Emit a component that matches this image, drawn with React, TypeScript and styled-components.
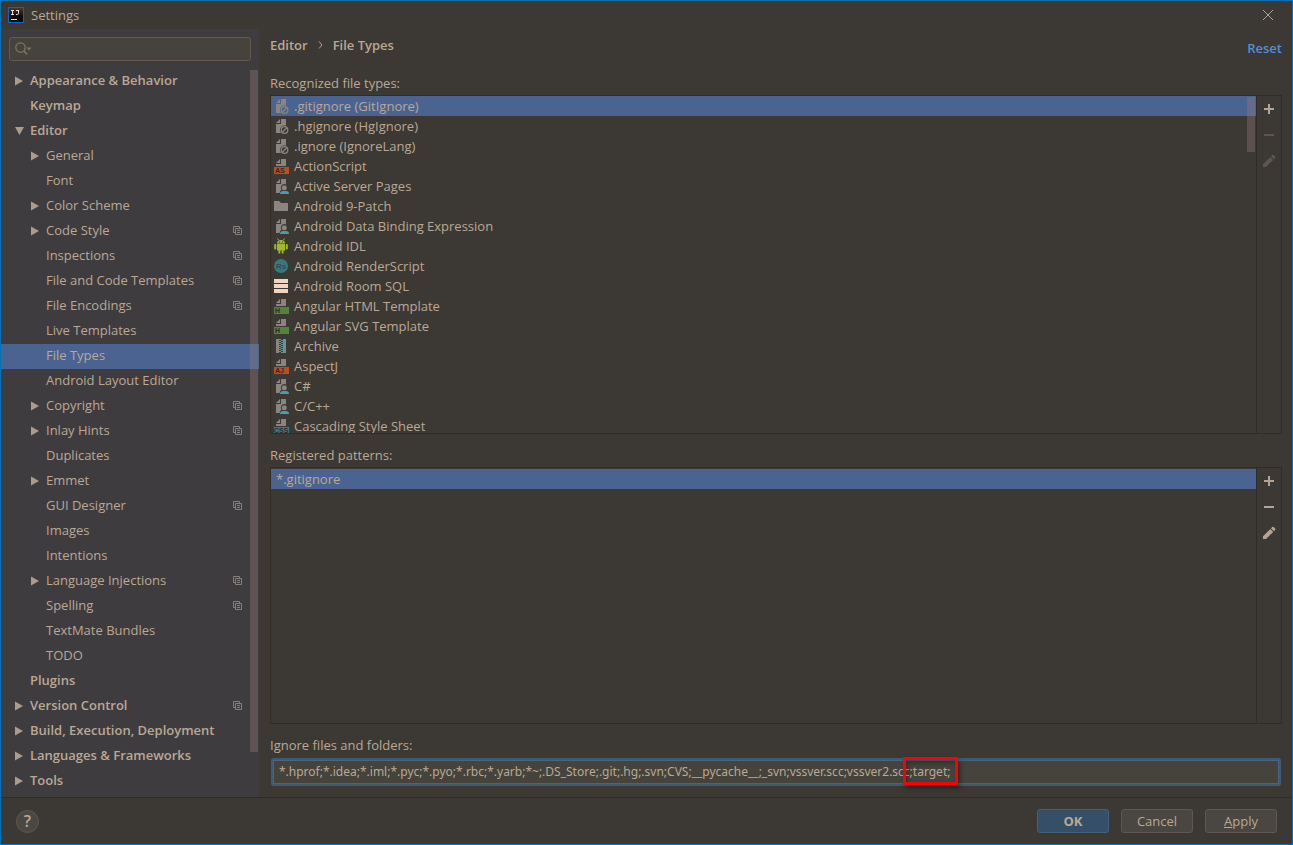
import React from "react";
import styled, { createGlobalStyle, css } from "styled-components";

const c = {
  bg: "#3c3833",
  side: "#3f3c3f",
  field: "#45433b",
  line: "#302d29",
  text: "#bba895",
  select: "#4b6390",
  icon: "#8a857e",
  frame: "#0b6fb3",
  blue: "#5390d6",
};

const Global = createGlobalStyle`
  * { box-sizing: border-box; }
  body {
    margin: 0;
    background: ${c.bg};
    color: ${c.text};
    font: 13px/20px "Open Sans", "Noto Sans", sans-serif;
  }
  button, input { font: inherit; color: inherit; }
`;

const Window = styled.div`
  display: flex;
  flex-direction: column;
  height: 100vh;
  min-height: 600px;
  border: 1px solid ${c.frame};
`;

const TitleBar = styled.header`
  display: flex;
  align-items: center;
  flex: none;
  height: 28px;
  padding: 0 18px 0 7px;
`;

const Title = styled.span`
  flex: 1;
  margin-left: 7px;
`;

const IconButton = styled.button`
  display: flex;
  align-items: center;
  justify-content: center;
  padding: 0;
  border: 0;
  background: none;
  color: #b5a496;
  &:disabled { color: #5d554e; }
`;

const Body = styled.div`
  display: flex;
  flex: 1;
  min-height: 0;
`;

const Sidebar = styled.aside`
  position: relative;
  display: flex;
  flex-direction: column;
  flex: none;
  width: 258px;
  padding-top: 8px;
  background: ${c.side};
`;

const SearchBox = styled.label`
  display: flex;
  align-items: center;
  flex: none;
  height: 24px;
  margin: 0 8px 8px;
  padding-left: 5px;
  border: 1px solid #64584f;
  border-radius: 3px;
  background: ${c.field};
`;

const SearchInput = styled.input`
  flex: 1;
  min-width: 0;
  border: 0;
  outline: 0;
  background: none;
`;

const Tree = styled.ul`
  flex: 1;
  min-height: 0;
  margin: 0;
  padding: 0;
  overflow: hidden;
  list-style: none;
`;

const TreeRow = styled.li<{ $level: number; $selected?: boolean }>`
  display: flex;
  align-items: center;
  height: 25px;
  padding: 0 17px 2px ${(p) => (p.$level ? 29 : 13)}px;
  font-weight: ${(p) => (p.$level ? 400 : 600)};
  background: ${(p) => (p.$selected ? c.select : "transparent")};
`;

const ArrowSlot = styled.span`
  display: flex;
  align-items: center;
  width: 16px;
`;

const TreeLabel = styled.span`
  flex: 1;
  padding-bottom: 1px;
  white-space: nowrap;
`;

const Thumb = styled.div<{ $top: number; $right: number; $length: string }>`
  position: absolute;
  top: ${(p) => p.$top}px;
  right: ${(p) => p.$right}px;
  width: 8px;
  height: ${(p) => p.$length};
  background: rgba(148, 127, 120, 0.35);
`;

const Main = styled.main`
  display: flex;
  flex-direction: column;
  flex: 1;
  min-width: 0;
  padding: 6px 10px 11px 11px;
`;

const Heading = styled.div`
  display: flex;
  align-items: flex-start;
  justify-content: space-between;
  flex: none;
  height: 38px;
  font-weight: 600;
`;

const Crumbs = styled.nav`
  display: flex;
  align-items: center;
  gap: 10px;
`;

const Reset = styled.a`
  padding-top: 3px;
  color: ${c.blue};
  text-decoration: none;
`;

const SectionLabel = styled.label<{ $gap?: boolean }>`
  flex: none;
  height: 22px;
  margin-top: ${(p) => (p.$gap ? 11 : 0)}px;
`;

const Panel = styled.div<{ $fixed?: boolean }>`
  display: flex;
  min-height: 0;
  border: 1px solid ${c.line};
  ${(p) =>
    p.$fixed
      ? css`
          flex: none;
          height: 257px;
        `
      : css`
          flex: 1;
        `}
`;

const List = styled.ul<{ $inset?: boolean }>`
  position: relative;
  flex: 1;
  margin: 0;
  padding: ${(p) => (p.$inset ? 1 : 0)}px 0 0;
  overflow: hidden;
  list-style: none;
`;

const ListRow = styled.li<{ $selected?: boolean }>`
  display: flex;
  align-items: center;
  gap: 5px;
  height: 20px;
  padding-left: 2px;
  white-space: nowrap;
  background: ${(p) => (p.$selected ? c.select : "transparent")};
`;

const PatternText = styled.span`
  padding-left: 3px;
`;

const Tools = styled.div`
  display: flex;
  flex-direction: column;
  align-items: center;
  gap: 10px;
  width: 25px;
  padding-top: 5px;
  border-left: 1px solid ${c.line};
`;

const FieldWrap = styled.div`
  position: relative;
  flex: none;
  padding: 1px 1px 0;
`;

const Field = styled.input`
  display: block;
  width: 100%;
  height: 28px;
  padding: 0 6px 2px;
  border: 2px solid #3d5a73;
  border-radius: 2px;
  outline: 0;
  background: ${c.field};
  box-shadow: inset 0 0 0 1px #466582;
  font: 12px "Noto Sans", sans-serif;
`;

const Highlight = styled.div`
  position: absolute;
  top: 0;
  left: 633px;
  width: 55px;
  height: 28px;
  border: 3px solid #fb0007;
  box-shadow: 2px 3px 5px rgba(0, 0, 0, 0.4), inset 2px 3px 5px rgba(0, 0, 0, 0.3);
  pointer-events: none;
`;

const Footer = styled.footer`
  display: flex;
  align-items: center;
  gap: 12px;
  flex: none;
  height: 47px;
  padding: 0 15px;
  border-top: 1px solid ${c.line};
`;

const Help = styled.button`
  width: 23px;
  height: 23px;
  margin-right: auto;
  padding: 0;
  border: 1px solid #5e5850;
  border-radius: 50%;
  background: #4b4741;
  font-size: 16px;
  font-weight: 600;
  line-height: 20px;
`;

const Button = styled.button<{ $primary?: boolean }>`
  width: 72px;
  height: 24px;
  padding: 0;
  border: 1px solid ${(p) => (p.$primary ? "#44617b" : "#5e5850")};
  border-radius: 3px;
  background: ${(p) => (p.$primary ? "#364f69" : "#4a4641")};
  font-weight: ${(p) => (p.$primary ? 700 : 400)};
  line-height: 20px;
`;

const Arrow = ({ open }: { open?: boolean }) => (
  <svg width="10" height="10" viewBox="0 0 10 10" fill="#ad9c8d" aria-hidden>
    {open ? <path d="M1 1h9L5.500 9z" /> : <path d="M1 .5v9L9 5z" />}
  </svg>
);

const CopyIcon = () => (
  <svg width="9" height="9" viewBox="0 0 9 9" fill="none" stroke="#85807c" aria-hidden>
    <path d="M2 6.500H.5v-6h6V2M2.500 2.500h6v6h-6zM4 4.500h3M4 6.500h3" />
  </svg>
);

const Logo = () => (
  <svg width="16" height="16" viewBox="0 0 16 16" aria-hidden>
    <defs>
      <linearGradient id="logo" x1="0" y1="0" x2="0" y2="1">
        <stop offset="0" stopColor="#4a3c38" />
        <stop offset="0.6" stopColor="#0c0a0a" />
      </linearGradient>
    </defs>
    <rect x="0.5" y="0.5" width="15" height="15" fill="url(#logo)" stroke="#0f62c4" />
    <path
      d="M3 3.500h3M4.500 3.500v4M3 7.500h3M8 3.500h3M10.500 3.500v3q0 1-1 1H8M3 12.500h6"
      fill="none"
      stroke="#f3e2d4"
    />
  </svg>
);

const SearchIcon = () => (
  <svg width="17" height="14" viewBox="0 0 17 14" fill="none" stroke="#7c756c" aria-hidden>
    <circle cx="5.500" cy="5.500" r="4.700" strokeWidth="1.200" />
    <path d="M9 9l3 3.200" strokeWidth="1.600" />
    <path d="M11.500 5.500h5L14 8.500z" fill="#7c756c" stroke="none" />
  </svg>
);

const CloseIcon = () => (
  <svg width="12" height="12" viewBox="0 0 12 12" stroke="currentColor" aria-hidden>
    <path d="M1 1l10 10M11 1L1 11" />
  </svg>
);

const Plus = () => (
  <svg width="16" height="16" viewBox="0 0 16 16" fill="currentColor" aria-hidden>
    <path d="M7 3h2v4h4v2H9v4H7V9H3V7h4z" />
  </svg>
);

const Minus = () => (
  <svg width="16" height="16" viewBox="0 0 16 16" fill="currentColor" aria-hidden>
    <path d="M3 7h10v2H3z" />
  </svg>
);

const Pencil = () => (
  <svg width="16" height="16" viewBox="0 0 16 16" fill="currentColor" aria-hidden>
    <path d="M2 11.200L9.300 4l2.900 2.900L5 14H2zM10 3.300l1.300-1.200q.7-.6 1.400 0l1.400 1.400q.7.700 0 1.400L12.900 6.200z" />
  </svg>
);

type Kind =
  | "ignore"
  | "user"
  | "folder"
  | "android"
  | "rs"
  | "sql"
  | "archive"
  | { tag: string; color: string };

const Page = ({ short }: { short?: boolean }) => (
  <path
    fill={c.icon}
    d={short ? "M7 1v4H3zM8 1h5v7H3V6h5z" : "M7 1v4H3zM8 1h5v14H3V6h5z"}
  />
);

const FileIcon = ({ kind, selected }: { kind: Kind; selected?: boolean }) => {
  const back = selected ? c.select : c.bg;
  return (
    <svg width="16" height="16" viewBox="0 0 16 16" aria-hidden>
      {typeof kind === "object" && (
        <>
          <Page short />
          <rect x="1" y="9" width="15" height="7" fill={kind.color} />
          <text
            x={kind.tag.length > 2 ? 1 : 2}
            y="15"
            fontSize="7"
            fontWeight="700"
            fontFamily="Liberation Sans, sans-serif"
            fill="#35291f"
          >
            {kind.tag}
          </text>
        </>
      )}
      {kind === "ignore" && (
        <>
          <Page />
          <circle cx="11.500" cy="12" r="4.600" fill={back} />
          <circle cx="11.500" cy="12" r="3.300" fill="none" stroke={c.icon} strokeWidth="1.300" />
          <path d="M9.300 14.200l4.400-4.400" stroke={c.icon} strokeWidth="1.300" />
        </>
      )}
      {kind === "user" && (
        <>
          <Page />
          <path d="M11.500 6a3.700 3.700 0 0 1 3 6v1H16v3H6.500l.5-3 1.600-1a3.700 3.700 0 0 1 2.900-6z" fill={back} />
          <circle cx="11.300" cy="9.700" r="2.500" fill={c.icon} />
          <path d="M7 16q0-3 3-3h3q3 0 3 3z" fill="#41a0b5" />
        </>
      )}
      {kind === "folder" && <path d="M1 3h5l2 2h7v8H1z" fill={c.icon} />}
      {kind === "android" && (
        <g fill="#a3b92c">
          <path d="M4 5.500a4 3.500 0 0 1 8 0zM4 6h8v6.500H4zM5.500 12h1.800v3.500H5.500zM8.700 12h1.800v3.500H8.700z" />
          <rect x="1.200" y="6" width="2" height="5.500" rx="1" />
          <rect x="12.800" y="6" width="2" height="5.500" rx="1" />
          <path d="M4.500.5l1.500 2M11.500.5l-1.500 2" stroke="#a3b92c" />
          <path d="M6 3.500h1v1H6zM9 3.500h1v1H9z" fill={back} />
        </g>
      )}
      {kind === "rs" && (
        <>
          <circle cx="8" cy="8" r="7" fill="#397780" />
          <text
            x="8"
            y="11"
            textAnchor="middle"
            fontSize="8"
            fontWeight="700"
            fontFamily="Liberation Sans, sans-serif"
            fill="#2c4f56"
          >
            Rs
          </text>
        </>
      )}
      {kind === "sql" && <path d="M1 1h14v4H1zM1 6h14v4H1zM1 11h14v4H1z" fill="#f0d5bf" />}
      {kind === "archive" && (
        <>
          <path d="M3 1h3v14H3zM10 1h3v14h-3z" fill={c.icon} />
          <path d="M7 1v14" stroke="#41a0b5" strokeWidth="2" strokeDasharray="1 1" />
          <path d="M9 2v13" stroke="#41a0b5" strokeWidth="2" strokeDasharray="1 1" />
        </>
      )}
    </svg>
  );
};

type Node = { label: string; level?: number; arrow?: "open" | "closed"; copy?: boolean; selected?: boolean };

const tree: Node[] = [
  { label: "Appearance & Behavior", arrow: "closed" },
  { label: "Keymap" },
  { label: "Editor", arrow: "open" },
  { label: "General", level: 1, arrow: "closed" },
  { label: "Font", level: 1 },
  { label: "Color Scheme", level: 1, arrow: "closed" },
  { label: "Code Style", level: 1, arrow: "closed", copy: true },
  { label: "Inspections", level: 1, copy: true },
  { label: "File and Code Templates", level: 1, copy: true },
  { label: "File Encodings", level: 1, copy: true },
  { label: "Live Templates", level: 1 },
  { label: "File Types", level: 1, selected: true },
  { label: "Android Layout Editor", level: 1 },
  { label: "Copyright", level: 1, arrow: "closed", copy: true },
  { label: "Inlay Hints", level: 1, arrow: "closed", copy: true },
  { label: "Duplicates", level: 1 },
  { label: "Emmet", level: 1, arrow: "closed" },
  { label: "GUI Designer", level: 1, copy: true },
  { label: "Images", level: 1 },
  { label: "Intentions", level: 1 },
  { label: "Language Injections", level: 1, arrow: "closed", copy: true },
  { label: "Spelling", level: 1, copy: true },
  { label: "TextMate Bundles", level: 1 },
  { label: "TODO", level: 1 },
  { label: "Plugins" },
  { label: "Version Control", arrow: "closed", copy: true },
  { label: "Build, Execution, Deployment", arrow: "closed" },
  { label: "Languages & Frameworks", arrow: "closed" },
  { label: "Tools", arrow: "closed" },
];

const red = "#ba4f22";
const green = "#54833a";

const fileTypes: [string, Kind][] = [
  [".gitignore (GitIgnore)", "ignore"],
  [".hgignore (HgIgnore)", "ignore"],
  [".ignore (IgnoreLang)", "ignore"],
  ["ActionScript", { tag: "AS", color: red }],
  ["Active Server Pages", "user"],
  ["Android 9-Patch", "folder"],
  ["Android Data Binding Expression", "user"],
  ["Android IDL", "android"],
  ["Android RenderScript", "rs"],
  ["Android Room SQL", "sql"],
  ["Angular HTML Template", { tag: "H", color: green }],
  ["Angular SVG Template", { tag: "H", color: green }],
  ["Archive", "archive"],
  ["AspectJ", { tag: "AJ", color: red }],
  ["C#", "user"],
  ["C/C++", "user"],
  ["Cascading Style Sheet", { tag: "CSS", color: "#387d8c" }],
];

const ListTools = ({ editable }: { editable?: boolean }) => (
  <Tools>
    <IconButton aria-label="Add"><Plus /></IconButton>
    <IconButton aria-label="Remove" disabled={!editable}><Minus /></IconButton>
    <IconButton aria-label="Edit" disabled={!editable}><Pencil /></IconButton>
  </Tools>
);

export default function App() {
  return (
    <>
      <Global />
      <Window>
        <TitleBar>
          <Logo />
          <Title>Settings</Title>
          <IconButton aria-label="Close"><CloseIcon /></IconButton>
        </TitleBar>
        <Body>
          <Sidebar>
            <SearchBox>
              <SearchIcon />
              <SearchInput type="text" aria-label="Search settings" />
            </SearchBox>
            <Tree role="tree" aria-label="Settings categories">
              {tree.map((n) => (
                <TreeRow
                  key={n.label}
                  role="treeitem"
                  aria-selected={!!n.selected}
                  $level={n.level ?? 0}
                  $selected={n.selected}
                >
                  <ArrowSlot>{n.arrow && <Arrow open={n.arrow === "open"} />}</ArrowSlot>
                  <TreeLabel>{n.label}</TreeLabel>
                  {n.copy && <CopyIcon />}
                </TreeRow>
              ))}
            </Tree>
            <Thumb $top={41} $right={1} $length="calc(100% - 86px)" />
          </Sidebar>
          <Main>
            <Heading>
              <Crumbs aria-label="Breadcrumb">
                <span>Editor</span>
                <svg width="5" height="8" viewBox="0 0 5 8" fill="none" stroke="#b5a496" aria-hidden>
                  <path d="M1 .5L4 4 1 7.500" />
                </svg>
                <span>File Types</span>
              </Crumbs>
              <Reset href="#reset">Reset</Reset>
            </Heading>
            <SectionLabel as="div" id="types-label">Recognized file types:</SectionLabel>
            <Panel>
              <List role="listbox" aria-labelledby="types-label">
                {fileTypes.map(([name, kind], i) => (
                  <ListRow key={name} role="option" aria-selected={i === 0} $selected={i === 0}>
                    <FileIcon kind={kind} selected={i === 0} />
                    <span>{name}</span>
                  </ListRow>
                ))}
                <Thumb as="li" role="presentation" $top={1} $right={1} $length="55px" />
              </List>
              <ListTools />
            </Panel>
            <SectionLabel as="div" id="patterns-label" $gap>Registered patterns:</SectionLabel>
            <Panel $fixed>
              <List role="listbox" aria-labelledby="patterns-label" $inset>
                <ListRow role="option" aria-selected $selected>
                  <PatternText>*.gitignore</PatternText>
                </ListRow>
              </List>
              <ListTools editable />
            </Panel>
            <SectionLabel htmlFor="ignored" $gap>Ignore files and folders:</SectionLabel>
            <FieldWrap>
              <Field
                id="ignored"
                type="text"
                defaultValue="*.hprof;*.idea;*.iml;*.pyc;*.pyo;*.rbc;*.yarb;*~;.DS_Store;.git;.hg;.svn;CVS;__pycache__;_svn;vssver.scc;vssver2.scc;target;"
              />
              <Highlight />
            </FieldWrap>
          </Main>
        </Body>
        <Footer>
          <Help aria-label="Help">?</Help>
          <Button $primary>OK</Button>
          <Button>Cancel</Button>
          <Button><u>A</u>pply</Button>
        </Footer>
      </Window>
    </>
  );
}
